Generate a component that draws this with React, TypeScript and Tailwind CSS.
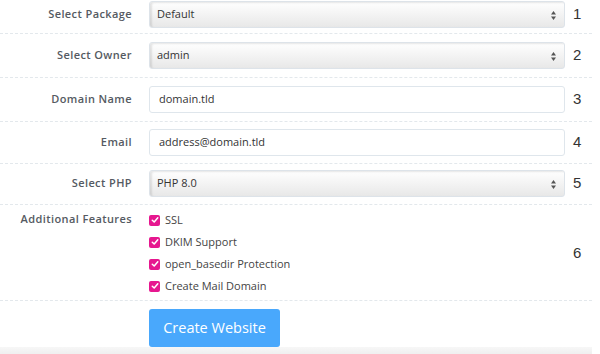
import { useState } from 'react';

const labelCls =
  "w-[132px] shrink-0 text-right text-[11px] font-semibold tracking-[0.4px] text-[#555a62] [font-family:'Open_Sans',sans-serif]";

const SelectBox = ({ value }: { value: string }) => (
  <div className="relative flex h-[27px] w-[416px] items-center rounded-[3px] border border-[#dde3e9] bg-gradient-to-b from-white to-[#e8e8e8] pl-[7px] shadow-[inset_2px_1px_2px_rgba(0,0,0,0.10)]">
    <span className="text-[11px] text-[#333] [font-family:'Open_Sans',sans-serif]">{value}</span>
    <svg className="absolute right-[8px] top-[9px]" width="5" height="9" viewBox="0 0 5 9">
      <path d="M2.5 0 L5 3.5 L0 3.5 Z" fill="#555" />
      <path d="M2.5 9 L5 5.5 L0 5.5 Z" fill="#555" />
    </svg>
  </div>
);

const TextBox = ({ value }: { value: string }) => (
  <div className="flex h-[27px] w-[416px] items-center rounded-[3px] border border-[#dfe6ec] bg-white pl-[9px]">
    <span className="text-[11px] text-[#333] [font-family:'Open_Sans',sans-serif]">{value}</span>
  </div>
);

const Num = ({ n }: { n: number }) => (
  <span className="ml-[8px] text-[15px] text-[#333] [font-family:'Liberation_Sans',Arial,sans-serif]">{n}</span>
);

const Row = ({ label, n, children, pad = 'py-[8px]' }: { label: string; n: number; children: React.ReactNode; pad?: string }) => (
  <div className={`flex items-center border-b border-dashed border-[#e3e8ec] ${pad}`}>
    <div className={labelCls}>{label}</div>
    <div className="ml-[17px]">{children}</div>
    <Num n={n} />
  </div>
);

const features = ['SSL', 'DKIM Support', 'open_basedir Protection', 'Create Mail Domain'];

export default function App() {
  const [checked, setChecked] = useState(features.map(() => true));

  return (
    <div className="h-[354px] w-[600px] overflow-hidden bg-white">
      <div className="w-[592px]">
        <div className="flex items-center border-b border-dashed border-[#e3e8ec] pt-[1px] pb-[5px]">
          <div className={labelCls}>Select Package</div>
          <div className="ml-[17px]">
            <SelectBox value="Default" />
          </div>
          <Num n={1} />
        </div>
        <Row label="Select Owner" n={2}>
          <SelectBox value="admin" />
        </Row>
        <Row label="Domain Name" n={3}>
          <TextBox value="domain.tld" />
        </Row>
        <Row label="Email" n={4} pad="pt-[7px] pb-[7px]">
          <TextBox value="address@domain.tld" />
        </Row>
        <Row label="Select PHP" n={5} pad="pt-[6px] pb-[7px]">
          <SelectBox value="PHP 8.0" />
        </Row>

        <div className="flex items-center border-b border-dashed border-[#e3e8ec] pt-[4px] pb-[3px]">
          <div className={`${labelCls} self-start leading-[20px]`}>Additional Features</div>
          <div className="ml-[17px] flex w-[416px] flex-col">
            {features.map((f, i) => (
              <label key={f} className="flex h-[22px] cursor-pointer items-center">
                <span
                  onClick={() => setChecked(c => c.map((v, j) => (j === i ? !v : v)))}
                  className={`flex h-[11px] w-[11px] items-center justify-center rounded-[2px] ${checked[i] ? 'bg-[#e6178f]' : 'border border-[#bbb] bg-white'}`}
                >
                  {checked[i] && (
                    <svg width="8" height="8" viewBox="0 0 8 8">
                      <path d="M1.3 4.2 L3.2 6 L6.8 1.8" stroke="white" strokeWidth="1.5" fill="none" strokeLinecap="round" strokeLinejoin="round" />
                    </svg>
                  )}
                </span>
                <span className="ml-[5px] text-[11px] text-[#444] [font-family:'Open_Sans',sans-serif]">{f}</span>
              </label>
            ))}
          </div>
          <Num n={6} />
        </div>

        <div className="pt-[8px] pl-[149px]">
          <button className="h-[38px] w-[131px] rounded-[3px] bg-[#49a8fc] text-[14.5px] text-white [font-family:'Open_Sans',sans-serif]">
            Create Website
          </button>
        </div>
        <div className="h-[10px] bg-gradient-to-b from-[#f7f7f7] to-[#ececec]" />
      </div>
    </div>
  );
}
